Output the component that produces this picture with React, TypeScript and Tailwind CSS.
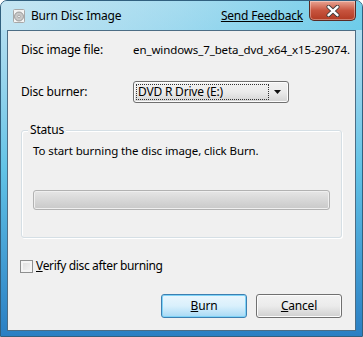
import React from "react"

const font = { fontFamily: '"Noto Sans", "DejaVu Sans", sans-serif' }

function DiscIcon() {
  return (
    <svg width="14" height="14" viewBox="0 0 14 14">
      <rect x="1.5" y="0.5" width="11" height="13" rx="1" fill="#f4f4f4" stroke="#a8a8a8" />
      <circle cx="7" cy="7.5" r="4.5" fill="#c9c9c9" stroke="#8a8a8a" strokeWidth="0.8" />
      <circle cx="7" cy="7.5" r="1.3" fill="#f4f4f4" stroke="#8a8a8a" strokeWidth="0.6" />
    </svg>
  )
}

function CloseButton() {
  return (
    <div className="w-[47px] h-[20px] rounded-b-[5px] border border-t-0 border-[#5a2a24] bg-gradient-to-b from-[#e8a493] via-[#c7543e] to-[#b23a22] flex items-center justify-center shadow-[inset_0_0_0_1px_rgba(255,255,255,0.35)]">
      <svg width="16" height="12" viewBox="0 0 16 12">
        <path
          d="M3.5 1.8 L12.5 10.2 M12.5 1.8 L3.5 10.2"
          stroke="#3a3a3a"
          strokeWidth="4"
          fill="none"
          strokeLinecap="round"
        />
        <path
          d="M3.5 1.8 L12.5 10.2 M12.5 1.8 L3.5 10.2"
          stroke="#ffffff"
          strokeWidth="2.4"
          fill="none"
          strokeLinecap="round"
        />
      </svg>
    </div>
  )
}

function WinButton({ label, accel, focused }: { label: string; accel: string; focused?: boolean }) {
  const rest = label.slice(1)
  return (
    <div
      className={
        "w-[86px] h-[24px] rounded-[3px] border flex items-center justify-center text-[12px] text-black " +
        (focused
          ? "border-[#3c7fb1] bg-gradient-to-b from-[#eaf6fd] via-[#d9f0fc] to-[#a7d9f5] shadow-[inset_0_0_0_1px_#7fd3f7]"
          : "border-[#707070] bg-gradient-to-b from-[#f2f2f2] via-[#ebebeb] to-[#cfcfcf] shadow-[inset_0_0_0_1px_#fcfcfc]")
      }
    >
      <span>
        <span className="underline">{accel}</span>
        {rest}
      </span>
    </div>
  )
}

export default function App() {
  return (
    <div
      style={font}
      className="w-[363px] h-[337px] overflow-hidden rounded-t-[7px] border border-[#31607f] bg-gradient-to-b from-[#c0e3f2] via-[#62c3e6] to-[#2a7fc3] flex flex-col tracking-[-0.2px]"
    >
      {/* Title bar */}
      <div className="h-[29px] flex items-start bg-gradient-to-r from-[#c6e6f3]/80 via-[#7fd1ec]/40 to-[#3fc0e4]/60">
        <div className="ml-[11px] mt-[8px]">
          <DiscIcon />
        </div>
        <div className="ml-[5px] mt-[7px] text-[12px] text-black leading-[16px]">Burn Disc Image</div>
        <div className="flex-1" />
        <div className="mt-[7px] mr-[6px] text-[12px] text-black underline leading-[16px]">Send Feedback</div>
        <div className="mr-[6px]">
          <CloseButton />
        </div>
      </div>

      {/* Client area */}
      <div className="mx-[6px] h-[301px] border border-[#4c6d85] bg-[#f0f0f0] text-[12px] text-black relative">
        <div className="pl-[13px] pt-[11px] grid grid-cols-[112px_auto] leading-[16px]">
          <div>Disc image file:</div>
          <div className="whitespace-nowrap text-[11.5px] tracking-[-0.1px]">en_windows_7_beta_dvd_x64_x15-29074.</div>
        </div>

        <div className="px-[13px] mt-[23px] flex items-center">
          <div className="w-[112px] shrink-0 leading-[16px]">Disc burner:</div>
          <div className="w-[156px] h-[22px] rounded-[3px] border border-[#707070] bg-gradient-to-b from-[#f2f2f2] via-[#ebebeb] to-[#d3d3d3] shadow-[inset_0_0_0_1px_#fcfcfc] flex items-center px-[2px]">
            <div className="flex-1 h-[16px] border border-dotted border-[#333] flex items-center pl-[1px] leading-[14px]">
              DVD R Drive (E:)
            </div>
            <svg width="16" height="10" viewBox="0 0 16 10" className="ml-[1px]">
              <path d="M4 3 L11 3 L7.5 7 Z" fill="#111" />
            </svg>
          </div>
        </div>

        {/* Status group */}
        <div className="mx-[13px] mt-[27px] h-[108px] border border-[#d5dfe5] rounded-[3px] relative shadow-[inset_1px_1px_0_#ffffff,1px_1px_0_#ffffff]">
          <div className="absolute -top-[9px] left-[6px] px-[2px] bg-[#f0f0f0] leading-[16px]">Status</div>
          <div className="pl-[11px] pt-[12px] leading-[16px] text-black text-[11.5px] tracking-[-0.1px]">
            To start burning the disc image, click Burn.
          </div>
          <div className="mx-[11px] mt-[31px] h-[20px] rounded-[3px] border border-[#b2b2b2] bg-gradient-to-b from-[#e6e6e6] via-[#d7d7d7] to-[#c9c9c9] shadow-[inset_0_0_0_1px_#efefef]" />
        </div>

        <div className="px-[12px] mt-[20px] flex items-center">
          <div className="w-[13px] h-[13px] border border-[#8e8f8f] bg-gradient-to-br from-[#dcdcdc] to-[#f6f6f6] shadow-[inset_0_0_0_2px_#f4f4f4]" />
          <div className="ml-[3px] leading-[16px] tracking-[-0.35px]">
            <span className="underline">V</span>erify disc after burning
          </div>
        </div>

        <div className="absolute left-[153px] top-[263px] flex gap-[9px]">
          <WinButton label="Burn" accel="B" focused />
          <WinButton label="Cancel" accel="C" />
        </div>
      </div>
    </div>
  )
}
